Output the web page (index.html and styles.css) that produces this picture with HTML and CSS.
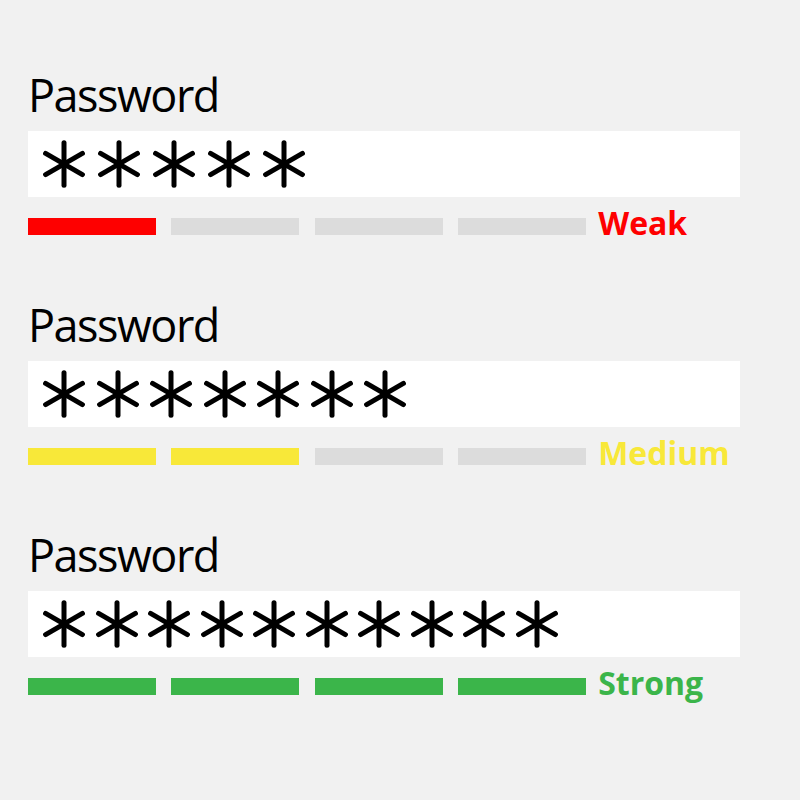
FILE: index.html
```html
<!DOCTYPE html>
<html lang="en">
<head>
<meta charset="utf-8">
<title>Password strength</title>
<link rel="stylesheet" href="styles.css">
</head>
<body>
<svg class="defs" width="0" height="0" aria-hidden="true">
  <symbol id="star" viewBox="-21 -24 42 48">
    <g stroke="#000" stroke-width="5" stroke-linecap="round">
      <line x1="0" y1="-21.2" x2="0" y2="21.2"/>
      <line x1="-18.4" y1="-10.6" x2="18.4" y2="10.6"/>
      <line x1="-18.4" y1="10.6" x2="18.4" y2="-10.6"/>
    </g>
  </symbol>
</svg>

<main class="page">
  <section class="field">
    <div class="field-label">Password</div>
    <div class="field-box">
      <div class="mask mask--wide">
        <svg class="star"><use href="#star"/></svg>
        <svg class="star"><use href="#star"/></svg>
        <svg class="star"><use href="#star"/></svg>
        <svg class="star"><use href="#star"/></svg>
        <svg class="star"><use href="#star"/></svg>
      </div>
    </div>
    <div class="meter">
      <span class="seg seg--weak"></span>
      <span class="seg"></span>
      <span class="seg"></span>
      <span class="seg"></span>
      <span class="strength strength--weak">Weak</span>
    </div>
  </section>

  <section class="field">
    <div class="field-label">Password</div>
    <div class="field-box">
      <div class="mask">
        <svg class="star"><use href="#star"/></svg>
        <svg class="star"><use href="#star"/></svg>
        <svg class="star"><use href="#star"/></svg>
        <svg class="star"><use href="#star"/></svg>
        <svg class="star"><use href="#star"/></svg>
        <svg class="star"><use href="#star"/></svg>
        <svg class="star"><use href="#star"/></svg>
      </div>
    </div>
    <div class="meter">
      <span class="seg seg--medium"></span>
      <span class="seg seg--medium"></span>
      <span class="seg"></span>
      <span class="seg"></span>
      <span class="strength strength--medium">Medium</span>
    </div>
  </section>

  <section class="field">
    <div class="field-label">Password</div>
    <div class="field-box">
      <div class="mask mask--tight">
        <svg class="star"><use href="#star"/></svg>
        <svg class="star"><use href="#star"/></svg>
        <svg class="star"><use href="#star"/></svg>
        <svg class="star"><use href="#star"/></svg>
        <svg class="star"><use href="#star"/></svg>
        <svg class="star"><use href="#star"/></svg>
        <svg class="star"><use href="#star"/></svg>
        <svg class="star"><use href="#star"/></svg>
        <svg class="star"><use href="#star"/></svg>
        <svg class="star"><use href="#star"/></svg>
      </div>
    </div>
    <div class="meter">
      <span class="seg seg--strong"></span>
      <span class="seg seg--strong"></span>
      <span class="seg seg--strong"></span>
      <span class="seg seg--strong"></span>
      <span class="strength strength--strong">Strong</span>
    </div>
  </section>
</main>
</body>
</html>
```

FILE: styles.css
```css
html, body {
  margin: 0;
  padding: 0;
  background: #f1f1f1;
}

body {
  width: 800px;
  height: 800px;
  overflow: hidden;
  font-family: "Open Sans", "Noto Sans", sans-serif;
}

.defs {
  position: absolute;
  width: 0;
  height: 0;
}

.page {
  display: flex;
  flex-direction: column;
  gap: 67px;
  padding: 72px 0 0 28px;
}

.field {
  display: flex;
  flex-direction: column;
}

.field-label {
  font-size: 45px;
  line-height: 45px;
  height: 45px;
  color: #000;
  letter-spacing: -1.5px;
}

.field-box {
  margin-top: 14px;
  width: 712px;
  height: 66px;
  background: #fff;
  display: flex;
  align-items: center;
  padding-left: 15px;
  box-sizing: border-box;
}

.mask {
  display: flex;
  gap: 11.5px;
  margin-top: -1px;
}

.mask--wide {
  gap: 13px;
}

.mask--tight {
  gap: 10.5px;
}

.star {
  width: 42px;
  height: 48px;
  display: block;
}

.meter {
  margin-top: 21px;
  height: 17px;
  display: flex;
  align-items: center;
  gap: 15.3px;
}

.seg {
  width: 128px;
  height: 17px;
  background: #dcdcdc;
  flex: none;
}

.seg--weak { background: #fe0000; }
.seg--medium { background: #f8e839; }
.seg--strong { background: #3bb54a; }

.strength {
  margin-left: -3px;
  margin-bottom: 8px;
  font-size: 32px;
  line-height: 32px;
  font-weight: 700;
  letter-spacing: 0;
}

.strength--weak { color: #fe0000; }
.strength--medium { color: #f8e839; }
.strength--strong { color: #3bb54a; }
```
